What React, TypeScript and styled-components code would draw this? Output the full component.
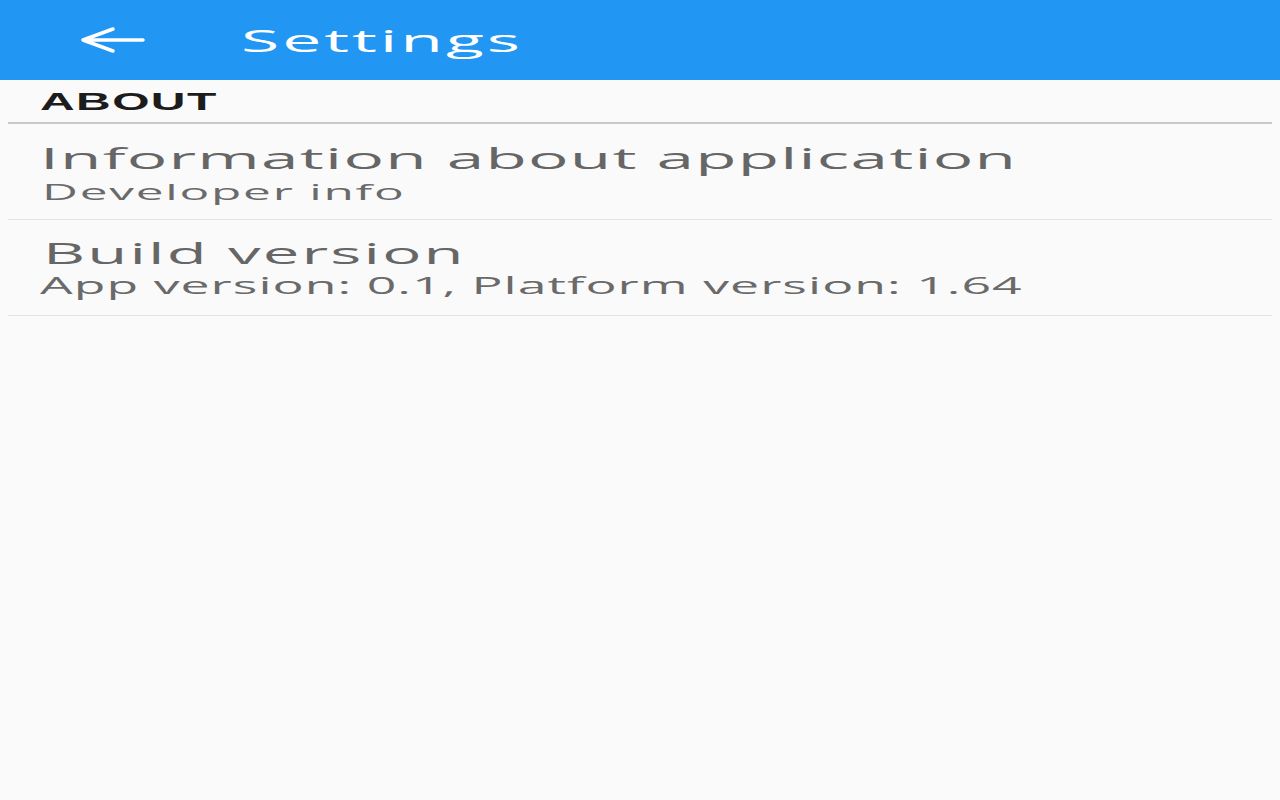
import React from "react";
import styled, { createGlobalStyle } from "styled-components";

const Global = createGlobalStyle`
  html, body { margin: 0; padding: 0; background: #fafafa; }
  body { font-family: "Open Sans", "Noto Sans", sans-serif; }
  #root { min-height: 100vh; background: #fafafa; }
`;

const Screen = styled.div`
  width: 1280px;
  height: 800px;
  background: #fafafa;
  display: flex;
  flex-direction: column;
  overflow: hidden;
`;

const AppBar = styled.header`
  height: 80px;
  background: #2196f3;
  display: flex;
  align-items: center;
  padding-left: 80px;
  box-sizing: border-box;
  flex-shrink: 0;
`;

const BackButton = styled.button`
  border: 0;
  background: transparent;
  padding: 0;
  margin: 0 95px 0 0;
  width: 66px;
  height: 28px;
  display: flex;
  cursor: pointer;
`;

const Stretch = styled.span<{ $scale: number; $spacing: number }>`
  display: inline-block;
  white-space: nowrap;
  transform: scaleX(${(p) => p.$scale});
  transform-origin: left center;
  letter-spacing: ${(p) => p.$spacing}px;
`;

const Title = styled.h1`
  margin: 0;
  font-family: "Open Sans", "Noto Sans", sans-serif;
  font-weight: 400;
  font-size: 31px;
  line-height: 40px;
  color: #ffffff;
`;

const Section = styled.div`
  margin: 0 8px;
  padding: 7px 0 5px 32px;
  border-bottom: 2px solid #c8c8c8;
`;

const SectionTitle = styled.div`
  font-family: "Liberation Sans", Arial, sans-serif;
  font-weight: 700;
  font-size: 24px;
  line-height: 30px;
  color: #1c1c1c;
`;

const Row = styled.div<{ $bottom: number }>`
  margin: 0 8px;
  padding: 16px 0 ${(p) => p.$bottom}px 32px;
  border-bottom: 1px solid #e2e2e2;
  display: flex;
  flex-direction: column;
`;

const RowTitle = styled.div<{ $size: number; $lh: number; $indent: number }>`
  font-size: ${(p) => p.$size}px;
  line-height: ${(p) => p.$lh}px;
  color: #666666;
  padding-left: ${(p) => p.$indent}px;
`;

const RowSub = styled.div<{ $size: number; $lh: number; $gap: number; $indent: number }>`
  font-size: ${(p) => p.$size}px;
  line-height: ${(p) => p.$lh}px;
  color: #6a6a6a;
  margin-top: ${(p) => p.$gap}px;
  padding-left: ${(p) => p.$indent}px;
`;

const BackArrow = () => (
  <svg width="66" height="28" viewBox="0 0 66 28" fill="none">
    <path
      d="M3 14 H63 M33 3 L3 14 L33 25"
      stroke="#ffffff"
      strokeWidth="3.5"
      strokeLinecap="round"
      strokeLinejoin="round"
    />
  </svg>
);

export default function App() {
  return (
    <>
      <Global />
      <Screen>
        <AppBar>
          <BackButton aria-label="Back">
            <BackArrow />
          </BackButton>
          <Title>
            <Stretch $scale={2.25} $spacing={1.3}>Settings</Stretch>
          </Title>
        </AppBar>
        <Section>
          <SectionTitle>
            <Stretch $scale={2} $spacing={0.7}>ABOUT</Stretch>
          </SectionTitle>
        </Section>
        <Row $bottom={15}>
          <RowTitle $size={30} $lh={36} $indent={0}>
            <Stretch $scale={2.25} $spacing={0.55}>Information about application</Stretch>
          </RowTitle>
          <RowSub $size={22} $lh={26} $gap={2} $indent={2}>
            <Stretch $scale={2.25} $spacing={0.78}>Developer info</Stretch>
          </RowSub>
        </Row>
        <Row $bottom={16}>
          <RowTitle $size={29} $lh={34} $indent={3}>
            <Stretch $scale={2.25} $spacing={0.96}>Build version</Stretch>
          </RowTitle>
          <RowSub $size={23} $lh={28} $gap={1} $indent={0}>
            <Stretch $scale={2.25} $spacing={0.46}>App version: 0.1, Platform version: 1.64</Stretch>
          </RowSub>
        </Row>
      </Screen>
    </>
  );
}
